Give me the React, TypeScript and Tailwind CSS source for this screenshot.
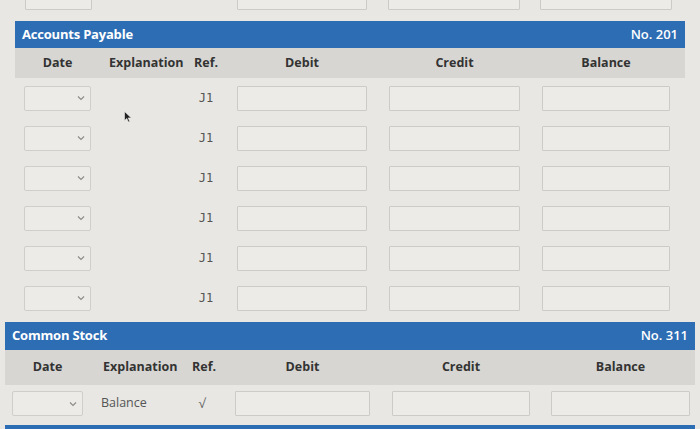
import React from "react";

const font = { fontFamily: '"Open Sans", "Noto Sans", sans-serif' };

function Chevron() {
  return (
    <svg width="8" height="6" viewBox="0 0 8 6" className="shrink-0">
      <path d="M1 1.5 L4 4.5 L7 1.5" fill="none" stroke="#8a8a88" strokeWidth="1.1" />
    </svg>
  );
}

function Select({ w }: { w: string }) {
  return (
    <div className={`${w} h-[25px] border border-[#cfcecb] bg-[#ecebe8] rounded-[2px] flex items-center justify-end pr-[5px]`}>
      <Chevron />
    </div>
  );
}

function Input({ w }: { w: string }) {
  return <div className={`${w} h-[25px] border border-[#cccbc7] bg-[#ecebe8] rounded-[1px]`} />;
}

function Row1() {
  return (
    <div className="h-[40px] flex items-center">
      <div className="w-[9px]" />
      <Select w="w-[67px]" />
      <div className="w-[99px]" />
      <div className="w-[32px] text-center text-[12px] text-[#555]" style={{ fontFamily: '"DejaVu Sans Mono", monospace' }}>
        J1
      </div>
      <div className="w-[15px]" />
      <Input w="w-[130px]" />
      <div className="w-[22px]" />
      <Input w="w-[131px]" />
      <div className="w-[22px]" />
      <Input w="w-[128px]" />
    </div>
  );
}

export default function App() {
  return (
    <div className="w-[700px] h-[429px] overflow-hidden bg-[#e8e7e3] relative" style={font}>
      {/* partial row from previous section */}
      <div className="h-[21px] relative overflow-hidden">
        <div className="flex items-center mt-[-15px] ml-[25px]">
          <Input w="w-[67px]" />
          <div className="w-[145px]" />
          <Input w="w-[130px]" />
          <div className="w-[21px]" />
          <Input w="w-[132px]" />
          <div className="w-[20px]" />
          <Input w="w-[132px]" />
        </div>
      </div>

      {/* Accounts Payable */}
      <div className="mx-[15px]">
        <div className="h-[27px] bg-[#2d6db4] flex items-center justify-between px-[7px] text-white text-[13px] font-bold">
          <span className="tracking-[-0.2px]">Accounts Payable</span>
          <span className="font-semibold">No. 201</span>
        </div>
        <div className="h-[30px] bg-[#d7d6d2] flex items-center text-[12.5px] font-bold text-[#333]">
          <div className="w-[9px]" />
          <div className="w-[67px] text-center">Date</div>
          <div className="w-[18px]" />
          <div className="w-[81px]">Explanation</div>
          <div className="w-[32px] pl-[4px]">Ref.</div>
          <div className="w-[15px]" />
          <div className="w-[130px] text-center">Debit</div>
          <div className="w-[22px]" />
          <div className="w-[131px] text-center">Credit</div>
          <div className="w-[22px]" />
          <div className="w-[128px] text-center">Balance</div>
        </div>
        <Row1 />
        <Row1 />
        <Row1 />
        <Row1 />
        <Row1 />
        <Row1 />
      </div>

      <div className="h-[4px]" />

      {/* Common Stock */}
      <div className="mx-[5px]">
        <div className="h-[28px] bg-[#2d6db4] flex items-center justify-between px-[7px] text-white text-[13px] font-bold">
          <span className="tracking-[-0.2px]">Common Stock</span>
          <span className="font-semibold">No. 311</span>
        </div>
        <div className="h-[35px] bg-[#d7d6d2] flex items-center text-[12.5px] font-bold text-[#333]">
          <div className="w-[7px]" />
          <div className="w-[71px] text-center">Date</div>
          <div className="w-[20px]" />
          <div className="w-[89px]">Explanation</div>
          <div className="w-[38px]">Ref.</div>
          <div className="w-[5px]" />
          <div className="w-[135px] text-center">Debit</div>
          <div className="w-[22px]" />
          <div className="w-[138px] text-center">Credit</div>
          <div className="w-[21px]" />
          <div className="w-[139px] text-center">Balance</div>
        </div>
        <div className="h-[37px] flex items-center">
          <div className="w-[7px]" />
          <Select w="w-[71px]" />
          <div className="w-[18px]" />
          <div className="w-[91px] text-[12.5px] text-[#555]">Balance</div>
          <div className="w-[20px] text-[13px] text-[#666] text-center">√</div>
          <div className="w-[23px]" />
          <Input w="w-[135px]" />
          <div className="w-[22px]" />
          <Input w="w-[138px]" />
          <div className="w-[21px]" />
          <Input w="w-[139px]" />
        </div>
        <div className="h-[3px]" />
        <div className="h-[10px] bg-[#2d6db4]" />
      </div>

      {/* mouse cursor */}
      <svg className="absolute left-[124px] top-[111px]" width="8" height="12" viewBox="0 0 8 12">
        <path d="M0.5 0.5 L0.5 9.5 L2.8 7.4 L4.4 11 L5.8 10.4 L4.2 6.9 L7.3 6.9 Z" fill="#222" stroke="#eee" strokeWidth="0.6" />
      </svg>
    </div>
  );
}
